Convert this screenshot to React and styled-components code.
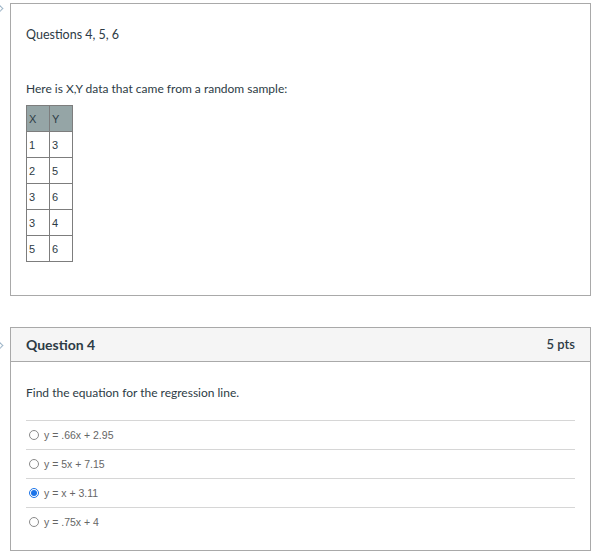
import React from 'react';
import styled, { createGlobalStyle } from 'styled-components';

const GlobalStyle = createGlobalStyle`
  body {
    margin: 0;
    background: #fff;
    font-family: Lato, "Liberation Sans", sans-serif;
    color: #2d3b45;
  }
`;

const Page = styled.div`
  width: 607px;
  padding: 3px 16px 0 10px;
  box-sizing: border-box;
  display: flex;
  flex-direction: column;
  gap: 31px;
`;

const Card = styled.div`
  position: relative;
  border: 1px solid #a9a9a9;
  background: #fff;
`;

const Marker = styled.span`
  position: absolute;
  left: -16px;
  top: ${(p) => p.$top}px;
  width: 6px;
  height: 6px;
  border-top: 1px solid #9fb6c9;
  border-right: 1px solid #9fb6c9;
  transform: rotate(45deg);
`;

const Body = styled.div`
  padding: ${(p) => p.$pad};
`;

const Text = styled.p`
  margin: 0;
  font-size: ${(p) => p.$size || 12}px;
  line-height: 16px;
  color: #2d3b45;
  margin-bottom: ${(p) => p.$mb || 0}px;
`;

const DataTable = styled.table`
  border-collapse: collapse;
  font-family: "Liberation Sans", Arial, sans-serif;
  font-size: 11px;
  color: #2d3b45;
  td, th {
    border: 1px solid #7d7d7d;
    width: 23px;
    height: 26px;
    padding: 0 0 0 2px;
    text-align: left;
    font-weight: normal;
    box-sizing: border-box;
  }
  th {
    background: #95a5a6;
  }
`;

const Header = styled.div`
  display: flex;
  justify-content: space-between;
  align-items: center;
  height: 34px;
  padding: 0 15px 1px 15px;
  box-sizing: border-box;
  background: #f5f5f5;
  border-bottom: 1px solid #a9a9a9;
`;

const Title = styled.h3`
  margin: 0;
  font-size: 14px;
  font-weight: 700;
  color: #2d3b45;
`;

const Points = styled.span`
  font-size: 13px;
  font-weight: 600;
  color: #2d3b45;
`;

const Answers = styled.div`
  display: flex;
  flex-direction: column;
`;

const Answer = styled.label`
  display: flex;
  align-items: center;
  gap: 5px;
  height: 28px;
  padding-left: 3px;
  border-top: 1px solid #d6d6d6;
  font-family: "Liberation Sans", Arial, sans-serif;
  font-size: 10.5px;
  color: #666;
`;

const Radio = styled.span`
  width: 10px;
  height: 10px;
  border-radius: 50%;
  box-sizing: border-box;
  border: 1px solid ${(p) => (p.$on ? '#1a73e8' : '#8a8a8a')};
  display: flex;
  align-items: center;
  justify-content: center;
  &::after {
    content: '';
    width: 6px;
    height: 6px;
    border-radius: 50%;
    background: ${(p) => (p.$on ? '#1a73e8' : 'transparent')};
  }
`;

const data = [
  [1, 3],
  [2, 5],
  [3, 6],
  [3, 4],
  [5, 6],
];

const answers = [
  { text: 'y = .66x + 2.95' },
  { text: 'y = 5x + 7.15' },
  { text: 'y = x + 3.11', on: true },
  { text: 'y = .75x + 4' },
];

const App = () => (
  <>
    <GlobalStyle />
    <Page>
      <Card>
        <Marker $top={1} />
        <Body $pad="23px 15px 33px 15px">
          <Text $size={12.5} $mb={38}>Questions 4, 5, 6</Text>
          <Text $mb={8}>Here is X,Y data that came from a random sample:</Text>
          <DataTable>
            <thead>
              <tr>
                <th>X</th>
                <th>Y</th>
              </tr>
            </thead>
            <tbody>
              {data.map(([x, y], i) => (
                <tr key={i}>
                  <td>{x}</td>
                  <td>{y}</td>
                </tr>
              ))}
            </tbody>
          </DataTable>
        </Body>
      </Card>
      <Card>
        <Marker $top={14} />
        <Header>
          <Title>Question 4</Title>
          <Points>5 pts</Points>
        </Header>
        <Body $pad="23px 15px 14px 15px">
          <Text $mb={19}>Find the equation for the regression line.</Text>
          <Answers>
            {answers.map((a) => (
              <Answer key={a.text}>
                <Radio $on={a.on} />
                {a.text}
              </Answer>
            ))}
          </Answers>
        </Body>
      </Card>
    </Page>
  </>
);

export default App;
